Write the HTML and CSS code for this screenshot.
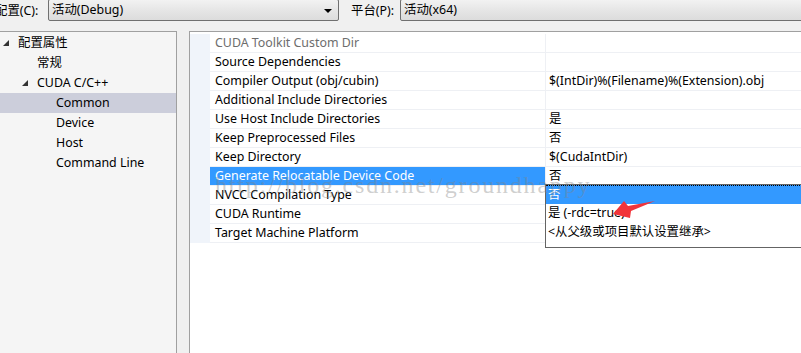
FILE: index.html
```html
<!DOCTYPE html>
<html lang="zh-CN">

<head>
  <meta charset="UTF-8">
  <title>CUDA C/C++ 属性页</title>
  <link rel="stylesheet" href="styles.css">
</head>

<body>
  <div class="toolbar">
    <label class="lbl lbl-cfg">配置(C):</label>
    <div class="combo combo-cfg">活动(Debug)<span class="caret"></span></div>
    <label class="lbl">平台(P):</label>
    <div class="combo combo-plat">活动(x64)</div>
  </div>

  <div class="main">
    <ul class="tree">
      <li class="node lvl0"><span class="tri"></span>配置属性</li>
      <li class="node lvl1">常规</li>
      <li class="node lvl1"><span class="tri"></span>CUDA C/C++</li>
      <li class="node lvl2 sel">Common</li>
      <li class="node lvl2">Device</li>
      <li class="node lvl2">Host</li>
      <li class="node lvl2">Command Line</li>
    </ul>

    <div class="grid">
      <div class="row dim"><span class="gut"></span><span class="name">CUDA Toolkit Custom Dir</span><span class="val"></span></div>
      <div class="row"><span class="gut"></span><span class="name">Source Dependencies</span><span class="val"></span></div>
      <div class="row"><span class="gut"></span><span class="name">Compiler Output (obj/cubin)</span><span class="val">$(IntDir)%(Filename)%(Extension).obj</span></div>
      <div class="row"><span class="gut"></span><span class="name">Additional Include Directories</span><span class="val"></span></div>
      <div class="row"><span class="gut"></span><span class="name">Use Host Include Directories</span><span class="val">是</span></div>
      <div class="row"><span class="gut"></span><span class="name">Keep Preprocessed Files</span><span class="val">否</span></div>
      <div class="row"><span class="gut"></span><span class="name">Keep Directory</span><span class="val">$(CudaIntDir)</span></div>
      <div class="row active"><span class="gut"></span><span class="name">Generate Relocatable Device Code</span><span class="val">否</span></div>
      <div class="row"><span class="gut"></span><span class="name">NVCC Compilation Type</span><span class="val"></span></div>
      <div class="row"><span class="gut"></span><span class="name">CUDA Runtime</span><span class="val"></span></div>
      <div class="row"><span class="gut"></span><span class="name">Target Machine Platform</span><span class="val"></span></div>

      <ul class="droplist">
        <li class="opt picked">否</li>
        <li class="opt">是 (-rdc=true)</li>
        <li class="opt">&lt;从父级或项目默认设置继承&gt;</li>
      </ul>

      <svg class="arrow" width="46" height="22" viewBox="0 0 46 22">
        <polygon points="2,16 13,3 17,8 44,3 20,13 19,20" fill="#f2343a"/>
      </svg>

      <div class="mark">http://blog.csdn.net/groundhappy</div>
    </div>
  </div>
</body>

</html>
```

FILE: styles.css
```css
* {
  box-sizing: border-box;
}

body {
  margin: 0;
  width: 801px;
  height: 353px;
  overflow: hidden;
  background: #f0f0f0;
  font-family: "Noto Sans", "Noto Sans CJK SC", sans-serif;
  font-size: 12.4px;
  color: #000;
}

.toolbar {
  display: flex;
  align-items: center;
  height: 22px;
  margin-top: -1px;
}

.lbl {
  white-space: nowrap;
}

.lbl-cfg {
  margin-left: -5px;
  width: 53px;
}

.combo {
  position: relative;
  height: 22px;
  line-height: 20px;
  padding-left: 3px;
  border: 1px solid #707070;
  border-radius: 2px;
  background: linear-gradient(#f2f2f2, #e6e6e6 50%, #dcdcdc);
}

.combo-cfg {
  width: 291px;
  margin-right: 12px;
}

.combo-plat {
  flex: 1;
  margin-left: 6px;
  margin-right: -4px;
}

.caret {
  position: absolute;
  right: 6px;
  top: 9px;
  border-left: 4px solid transparent;
  border-right: 4px solid transparent;
  border-top: 4px solid #000;
}

.main {
  display: flex;
  margin-top: 10px;
  height: 322px;
}

.tree {
  list-style: none;
  margin: 0;
  padding: 1px 0 0;
  width: 177px;
  background: #f5f5f5;
  border-top: 1px solid #a0a0a0;
  border-right: 1px solid #a0a0a0;
}

.node {
  position: relative;
  height: 20px;
  line-height: 20px;
  white-space: nowrap;
}

.lvl0 {
  padding-left: 18px;
}

.lvl1 {
  padding-left: 37px;
}

.lvl2 {
  padding-left: 56px;
}

.sel {
  background: #cccedb;
}

.tri {
  position: absolute;
  top: 7px;
  width: 0;
  height: 0;
  border-left: 6px solid transparent;
  border-bottom: 6px solid #333;
}

.lvl0 .tri {
  left: 3px;
}

.lvl1 .tri {
  left: 22px;
}

.grid {
  position: relative;
  flex: 1;
  margin-left: 12px;
  padding-top: 2px;
  background: #fff;
  border-top: 1px solid #a0a0a0;
  border-left: 1px solid #a0a0a0;
}

.row {
  display: flex;
  height: 19px;
  line-height: 18px;
  white-space: nowrap;
}

.gut {
  width: 20px;
  background: #f0f4fa;
}

.name {
  width: 336px;
  padding-left: 5px;
  border-bottom: 1px solid #eef0f4;
  border-right: 1px solid #eef0f4;
}

.val {
  flex: 1;
  padding-left: 3px;
  border-bottom: 1px solid #eef0f4;
}

.dim .name {
  color: #6d6d6d;
}

.active .name {
  background: #3399ff;
  color: #fff;
}

.droplist {
  position: absolute;
  left: 355px;
  top: 152px;
  width: 262px;
  height: 64px;
  margin: 0;
  padding: 0;
  list-style: none;
  background: #fff;
  border: 1px solid #646464;
}

.opt {
  height: 19px;
  line-height: 18px;
  padding-left: 2px;
  white-space: nowrap;
}

.picked {
  background: #3399ff;
  color: #fff;
  border-top: 1px dotted #000;
}

.arrow {
  position: absolute;
  left: 421px;
  top: 166px;
}

.mark {
  position: absolute;
  left: 25px;
  top: 140px;
  font-family: "Liberation Serif", serif;
  font-size: 24px;
  letter-spacing: 1.8px;
  color: rgba(130, 130, 130, 0.4);
  white-space: nowrap;
  pointer-events: none;
}
```
